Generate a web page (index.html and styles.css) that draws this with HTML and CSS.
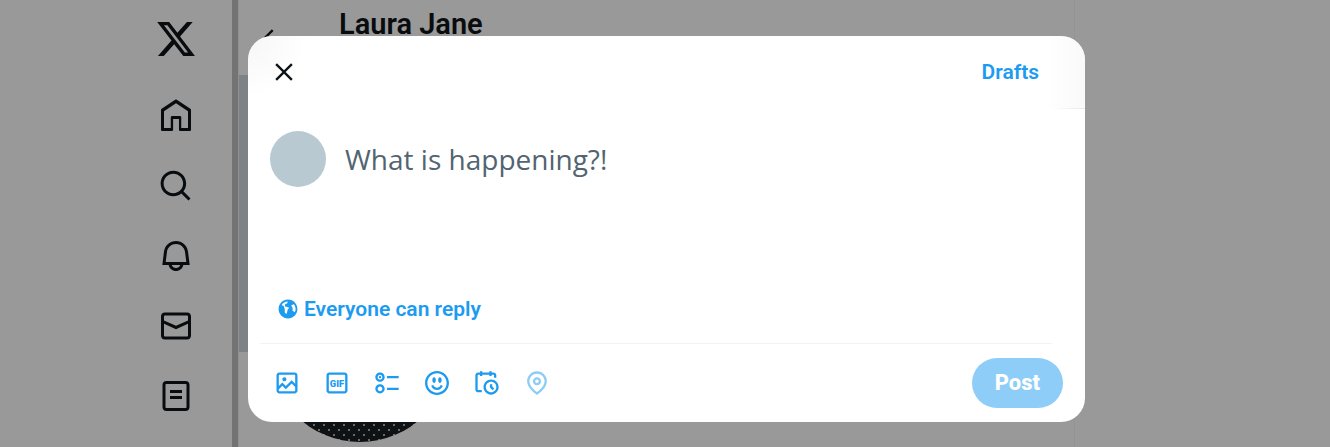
FILE: index.html
```html
<!DOCTYPE html>
<html lang="en">

<head>
    <meta charset="UTF-8">
    <meta name="viewport" content="width=device-width, initial-scale=1.0">
    <title>Laura Jane</title>
    <link rel="stylesheet" href="styles.css">
</head>

<body>
    <div class="page">
        <nav class="sidebar" aria-label="Main">
            <a class="logo" href="#" aria-label="X">
                <svg viewBox="0 0 24 24"><path d="M18.244 2.25h3.308l-7.227 8.26 8.502 11.24H16.17l-5.214-6.817L4.99 21.75H1.68l7.73-8.835L1.254 2.25H8.08l4.713 6.231zm-1.161 17.52h1.833L7.084 4.126H5.117z"/></svg>
            </a>
            <a href="#" aria-label="Home">
                <svg viewBox="0 0 24 24"><path d="M21.591 7.146L12.52 1.157c-.316-.21-.724-.21-1.04 0l-9.071 5.99c-.26.173-.409.456-.409.757v13.183c0 .502.418.913.929.913H9.14c.51 0 .929-.41.929-.913v-7.075h3.909v7.075c0 .502.417.913.928.913h6.165c.511 0 .929-.41.929-.913V7.904c0-.301-.158-.584-.408-.758zM20 20l-4.5.01.011-7.097c0-.502-.418-.913-.928-.913H9.44c-.511 0-.929.41-.929.913L8.5 20H4V8.773l8.011-5.342L20 8.75z"/></svg>
            </a>
            <a href="#" aria-label="Search">
                <svg viewBox="0 0 24 24"><path d="M10.25 3.75c-3.59 0-6.5 2.91-6.5 6.5s2.91 6.5 6.5 6.5c1.795 0 3.419-.726 4.596-1.904 1.178-1.177 1.904-2.801 1.904-4.596 0-3.59-2.91-6.5-6.5-6.5zm-8.5 6.5c0-4.694 3.806-8.5 8.5-8.5s8.5 3.806 8.5 8.5c0 1.986-.682 3.815-1.824 5.262l4.781 4.781-1.414 1.414-4.781-4.781c-1.447 1.142-3.276 1.824-5.262 1.824-4.694 0-8.5-3.806-8.5-8.5z"/></svg>
            </a>
            <a href="#" aria-label="Notifications">
                <svg viewBox="0 0 24 24"><path d="M19.993 9.042C19.48 5.017 16.054 2 11.996 2s-7.49 3.021-7.999 7.051L2.866 18H7.1c.463 2.282 2.481 4 4.9 4s4.437-1.718 4.9-4h4.236l-1.143-8.958zM12 20c-1.306 0-2.417-.835-2.829-2h5.658c-.412 1.165-1.523 2-2.829 2zm-6.866-4l.847-6.698C6.364 6.272 8.941 4 11.996 4s5.627 2.268 6.013 5.295L18.864 16H5.134z"/></svg>
            </a>
            <a href="#" aria-label="Messages">
                <svg viewBox="0 0 24 24"><path d="M1.998 5.5c0-1.381 1.119-2.5 2.5-2.5h15c1.381 0 2.5 1.119 2.5 2.5v13c0 1.381-1.119 2.5-2.5 2.5h-15c-1.381 0-2.5-1.119-2.5-2.5v-13zm2.5-.5c-.276 0-.5.224-.5.5v2.764l8 3.638 8-3.636V5.5c0-.276-.224-.5-.5-.5h-15zm15.5 5.463l-8 3.636-8-3.638V18.5c0 .276.224.5.5.5h15c.276 0 .5-.224.5-.5v-8.037z"/></svg>
            </a>
            <a href="#" aria-label="Lists">
                <svg viewBox="0 0 24 24"><path d="M3 4.5C3 3.12 4.12 2 5.5 2h13C19.88 2 21 3.12 21 4.5v15c0 1.38-1.12 2.5-2.5 2.5h-13C4.12 22 3 20.88 3 19.5v-15zM5.5 4c-.28 0-.5.22-.5.5v15c0 .28.22.5.5.5h13c.28 0 .5-.22.5-.5v-15c0-.28-.22-.5-.5-.5h-13zM16 10H8V8h8v2zm-8 2h8v2H8v-2z"/></svg>
            </a>
        </nav>

        <main class="profile">
            <header class="profile-head">
                <a href="#" aria-label="Back">
                    <svg viewBox="0 0 24 24"><path d="M7.414 13l5.043 5.04-1.414 1.42L3.586 12l7.457-7.46 1.414 1.42L7.414 11H21v2H7.414z"/></svg>
                </a>
                <h1>Laura Jane</h1>
            </header>
            <div class="banner"></div>
            <div class="photo"></div>
        </main>
    </div>

    <div class="overlay">
        <form class="modal" role="dialog" aria-label="Compose post">
            <div class="modal-head">
                <button class="close" type="button" aria-label="Close">
                    <svg viewBox="0 0 24 24"><path d="M10.59 12L4.54 5.96l1.42-1.42L12 10.59l6.04-6.05 1.42 1.42L13.41 12l6.05 6.04-1.42 1.42L12 13.41l-6.04 6.05-1.42-1.42L10.59 12z"/></svg>
                </button>
                <button class="drafts" type="button">Drafts</button>
            </div>

            <div class="compose">
                <div class="avatar"></div>
                <textarea aria-label="Post text" placeholder="What is happening?!"></textarea>
            </div>

            <button class="reply" type="button">
                <svg viewBox="0 0 24 24"><path d="M12 1.75C6.34 1.75 1.75 6.34 1.75 12S6.34 22.25 12 22.25 22.25 17.66 22.25 12 17.66 1.75 12 1.75zm-.25 10.48L10.5 17.5l-2-1.5v-3.5L7.5 9 5.03 7.59c1.42-2.24 3.89-3.75 6.72-3.84L11 6l-2 .5L8.5 9l5 1.5-1.75 1.73zM17 14v-3l-1.5-3 2.88-1.23c1.17 1.42 1.87 3.24 1.87 5.23 0 1.3-.3 2.52-.83 3.61L17 14z"/></svg>
                Everyone can reply
            </button>

            <hr>

            <div class="toolbar">
                <div class="tools">
                    <button type="button" aria-label="Media">
                        <svg viewBox="0 0 24 24"><path d="M3 5.5C3 4.119 4.119 3 5.5 3h13C19.881 3 21 4.119 21 5.5v13c0 1.381-1.119 2.5-2.5 2.5h-13C4.119 21 3 19.881 3 18.5v-13zM5.5 5c-.276 0-.5.224-.5.5v9.086l3-3 3 3 5-5 3 3V5.5c0-.276-.224-.5-.5-.5h-13zM19 15.414l-3-3-5 5-3-3-3 3V18.5c0 .276.224.5.5.5h13c.276 0 .5-.224.5-.5v-3.086zM9.75 7C8.784 7 8 7.784 8 8.75s.784 1.75 1.75 1.75 1.75-.784 1.75-1.75S10.716 7 9.75 7z"/></svg>
                    </button>
                    <button type="button" aria-label="GIF">
                        <svg viewBox="0 0 24 24"><path d="M3 5.5C3 4.119 4.12 3 5.5 3h13C19.88 3 21 4.119 21 5.5v13c0 1.381-1.12 2.5-2.5 2.5h-13C4.12 21 3 19.881 3 18.5v-13zM5.5 5c-.28 0-.5.224-.5.5v13c0 .276.22.5.5.5h13c.28 0 .5-.224.5-.5v-13c0-.276-.22-.5-.5-.5h-13z"/><text class="gif" x="12" y="15" text-anchor="middle">GIF</text></svg>
                    </button>
                    <button type="button" aria-label="Poll">
                        <svg viewBox="0 0 24 24"><path d="M6 5c-1.1 0-2 .895-2 2s.9 2 2 2 2-.895 2-2-.9-2-2-2zM2 7c0-2.209 1.79-4 4-4s4 1.791 4 4-1.79 4-4 4-4-1.791-4-4zm20 1H12V6h10v2zM6 15c-1.1 0-2 .895-2 2s.9 2 2 2 2-.895 2-2-.9-2-2-2zm-4 2c0-2.209 1.79-4 4-4s4 1.791 4 4-1.79 4-4 4-4-1.791-4-4zm20 1H12v-2h10v2zM7 7c0 .552-.45 1-1 1s-1-.448-1-1 .45-1 1-1 1 .448 1 1z"/></svg>
                    </button>
                    <button type="button" aria-label="Emoji">
                        <svg viewBox="0 0 24 24"><path d="M8 9.5C8 8.119 8.672 7 9.5 7S11 8.119 11 9.5 10.328 12 9.5 12 8 10.881 8 9.5zm6.5 2.5c.828 0 1.5-1.119 1.5-2.5S15.328 7 14.5 7 13 8.119 13 9.5s.672 2.5 1.5 2.5zM12 16c-2.224 0-3.021-2.227-3.051-2.316l-1.897.633c.05.15 1.271 3.684 4.949 3.684s4.898-3.533 4.949-3.684l-1.896-.638c-.033.095-.83 2.322-3.053 2.322zm10.25-4.001c0 5.652-4.598 10.25-10.25 10.25S1.75 17.652 1.75 12 6.348 1.75 12 1.75 22.25 6.348 22.25 12zm-2 0c0-4.549-3.701-8.25-8.25-8.25S3.75 7.451 3.75 12s3.701 8.25 8.25 8.25 8.25-3.701 8.25-8.25z"/></svg>
                    </button>
                    <button type="button" aria-label="Schedule">
                        <svg viewBox="0 0 24 24"><path d="M6 3V2h2v1h6V2h2v1h1.5C18.88 3 20 4.119 20 5.5v2h-2v-2c0-.276-.22-.5-.5-.5H16v1h-2V5H8v1H6V5H4.5c-.28 0-.5.224-.5.5v12c0 .276.22.5.5.5h3v2h-3C3.12 20 2 18.881 2 17.5v-12C2 4.119 3.12 3 4.5 3H6zm9.5 8c-2.49 0-4.5 2.015-4.5 4.5s2.01 4.5 4.5 4.5 4.5-2.015 4.5-4.5-2.01-4.5-4.5-4.5zM9 15.5C9 11.91 11.91 9 15.5 9s6.5 2.91 6.5 6.5-2.91 6.5-6.5 6.5S9 19.09 9 15.5zm5.5-2.5h2v2.086l1.71 1.707-1.42 1.414-2.29-2.293V13z"/></svg>
                    </button>
                    <button type="button" aria-label="Location" disabled>
                        <svg viewBox="0 0 24 24"><path d="M12 7c-1.93 0-3.5 1.57-3.5 3.5S10.07 14 12 14s3.5-1.57 3.5-3.5S13.93 7 12 7zm0 5c-.827 0-1.5-.673-1.5-1.5S11.173 9 12 9s1.5.673 1.5 1.5S12.827 12 12 12zm0-10c-4.687 0-8.5 3.813-8.5 8.5 0 5.967 7.621 11.116 7.945 11.332l.555.37.555-.37c.324-.216 7.945-5.365 7.945-11.332C20.5 5.813 16.687 2 12 2zm0 17.77c-1.665-1.241-6.5-5.196-6.5-9.27C5.5 6.916 8.416 4 12 4s6.5 2.916 6.5 6.5c0 4.073-4.835 8.028-6.5 9.27z"/></svg>
                    </button>
                </div>
                <button class="post" type="submit" disabled>Post</button>
            </div>
        </form>
    </div>
</body>

</html>
```
FILE: styles.css
```css
* {
    box-sizing: border-box;
    margin: 0;
    padding: 0;
}

body {
    font-family: Roboto, "Open Sans", sans-serif;
    color: #0f1419;
    background-color: #fff;
}

svg {
    display: block;
    width: 28px;
    height: 28px;
    fill: currentColor;
}

button {
    border: none;
    background: none;
    font-family: inherit;
    color: #1d9bf0;
    cursor: pointer;
}

a {
    color: inherit;
}

.page {
    display: flex;
    min-height: 100vh;
}

/* left navigation, icons sit against the right side */
.sidebar {
    flex: 0 0 238px;
    display: flex;
    flex-direction: column;
    align-items: flex-end;
    gap: 34px;
    padding: 18px 38px 0 0;
    border-right: 6px solid #c0c0c0;
}

.sidebar svg {
    width: 36px;
    height: 36px;
}

.sidebar .logo {
    margin-right: -3px;
    margin-bottom: 4px;
}

.sidebar .logo svg {
    width: 42px;
    height: 42px;
}

/* profile column */
.profile {
    flex: 0 1 837px;
    border-left: 1px solid #eff3f4;
    border-right: 1px solid #f4f6f7;
}

.profile-head {
    display: flex;
    gap: 52px;
    height: 75px;
    padding: 4px 20px;
}

.profile-head a {
    padding-top: 20px;
}

.profile-head h1 {
    font-size: 29px;
    line-height: 40px;
    font-weight: 600;
}

.banner {
    height: 277px;
    background-color: #cfd9de;
}

.photo {
    width: 182px;
    height: 182px;
    margin: -92px 0 0 30px;
    border-radius: 50%;
    background: radial-gradient(circle, #b0b0b0 1px, transparent 1px) 0 0 / 10px 10px,
        radial-gradient(circle, #b0b0b0 1px, transparent 1px) 5px 5px / 10px 10px,
        #1a1e22;
}

/* compose window over the dimmed page */
.overlay {
    position: fixed;
    top: 0;
    right: 0;
    bottom: 0;
    left: 0;
    display: flex;
    justify-content: center;
    align-items: flex-start;
    padding: 36px 0 0 3px;
    background-color: rgba(0, 0, 0, 0.4);
}

.modal {
    width: 100%;
    max-width: 837px;
    padding-bottom: 14px;
    border-radius: 24px;
    background-color: #fff;
    overflow: hidden;
}

.modal-head {
    display: flex;
    justify-content: space-between;
    align-items: center;
    height: 73px;
    padding: 0 46px 2px 22px;
    background: linear-gradient(to left, #e9e9e9, transparent) right bottom / 32px 1px no-repeat,
        radial-gradient(circle at 0 0, #f6f6f6, transparent 60px),
        linear-gradient(to left, #f9f9f9, transparent 40px);
}

.drafts {
    font-size: 21px;
    font-weight: 600;
}

.close {
    color: #0f1419;
}

.compose {
    display: flex;
    gap: 19px;
    padding: 22px 22px 0;
}

.avatar {
    flex: none;
    width: 56px;
    height: 56px;
    border-radius: 50%;
    background-color: #b9c9d2;
}

.compose textarea {
    flex: 1;
    height: 160px;
    padding-top: 8px;
    border: none;
    outline: none;
    resize: none;
    background: none;
    font-family: "Open Sans", sans-serif;
    font-size: 28px;
    line-height: 40px;
    color: #0f1419;
}

.compose textarea::placeholder {
    color: #536471;
    opacity: 1;
}

.reply {
    display: flex;
    align-items: center;
    gap: 5px;
    margin-left: 29px;
    font-size: 21px;
    line-height: 36px;
    font-weight: 600;
}

.reply svg {
    width: 22px;
    height: 22px;
}

hr {
    margin: 16px 33px 14px 12px;
    border: none;
    border-top: 1px solid #eff3f4;
}

.toolbar {
    display: flex;
    justify-content: space-between;
    align-items: center;
    padding: 0 22px 0 25px;
}

.tools {
    display: flex;
    gap: 22px;
}

.tools button:disabled {
    opacity: 0.5;
}

.gif {
    font-size: 8px;
    font-weight: 900;
}

.post {
    padding: 0 23px;
    border-radius: 25px;
    background-color: #8ecdf8;
    font-size: 22px;
    line-height: 50px;
    font-weight: 800;
    color: #fff;
}
```
